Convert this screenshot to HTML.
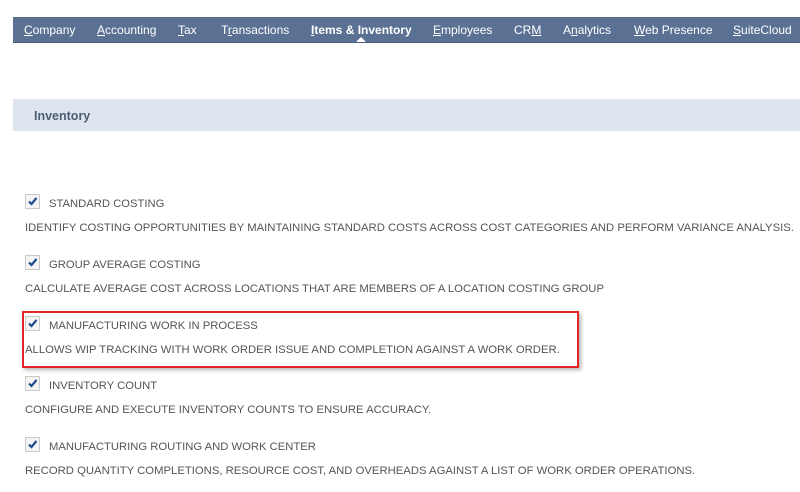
<!DOCTYPE html>
<html><head><style>
body{margin:0;width:800px;height:492px;background:#fff;font-family:"Liberation Sans",Arial,sans-serif;position:relative;overflow:hidden}
.nav{position:absolute;left:13px;top:17px;width:787px;height:25px;background:#5b7194;border-bottom:1px solid #4a5f80}
.nav span{position:absolute;top:6px;color:#fff;font-size:12px;white-space:nowrap}
.nav u{text-decoration:underline}
.nav b{font-weight:bold}
.tri{position:absolute;left:356px;top:37px;width:0;height:0;border-left:5px solid transparent;border-right:5px solid transparent;border-bottom:5px solid #fff}
.bar{position:absolute;left:13px;top:99px;width:787px;height:32px;background:#dfe5ee}
.bar span{position:absolute;left:21px;top:10px;font-size:12.5px;font-weight:bold;color:#4d5d76}
.cb{position:absolute;left:25px;width:13px;height:13px;border:1px solid #c9c9c9;background:#f4f4f4}
.cb svg{position:absolute;left:1px;top:1px}
.lbl{position:absolute;left:49px;font-size:11.25px;color:#555;white-space:nowrap}
.desc{position:absolute;left:25px;font-size:11.3px;color:#555;white-space:nowrap}
.red{position:absolute;left:22px;top:311px;width:553px;height:53px;border:2px solid #e3262a;box-shadow:2px 2px 4px rgba(0,0,0,.3)}
</style></head><body>
<div class="nav">
<span style="left:11px"><u>C</u>ompany</span>
<span style="left:84px"><u>A</u>ccounting</span>
<span style="left:165px"><u>T</u>ax</span>
<span style="left:208px">T<u>r</u>ansactions</span>
<span style="left:298px"><b><u>I</u>tems &amp; Inventory</b></span>
<span style="left:420px"><u>E</u>mployees</span>
<span style="left:501px">CR<u>M</u></span>
<span style="left:550px">A<u>n</u>alytics</span>
<span style="left:621px"><u>W</u>eb Presence</span>
<span style="left:720px"><u>S</u>uiteCloud</span>
</div>
<div class="tri"></div>
<div class="bar"><span>Inventory</span></div>

<div class="cb" style="top:194px"><svg width="11" height="11" viewBox="0 0 11 11"><path d="M2 5.5 L4.5 8 L9.5 2" stroke="#1f4c8f" stroke-width="2.2" fill="none"/></svg></div>
<div class="lbl" style="top:198px">STANDARD COSTING</div>
<div class="desc" style="top:222px">IDENTIFY COSTING OPPORTUNITIES BY MAINTAINING STANDARD COSTS ACROSS COST CATEGORIES AND PERFORM VARIANCE ANALYSIS.</div>

<div class="cb" style="top:255px"><svg width="11" height="11" viewBox="0 0 11 11"><path d="M2 5.5 L4.5 8 L9.5 2" stroke="#1f4c8f" stroke-width="2.2" fill="none"/></svg></div>
<div class="lbl" style="top:259px">GROUP AVERAGE COSTING</div>
<div class="desc" style="top:283px">CALCULATE AVERAGE COST ACROSS LOCATIONS THAT ARE MEMBERS OF A LOCATION COSTING GROUP</div>

<div class="cb" style="top:316px"><svg width="11" height="11" viewBox="0 0 11 11"><path d="M2 5.5 L4.5 8 L9.5 2" stroke="#1f4c8f" stroke-width="2.2" fill="none"/></svg></div>
<div class="lbl" style="top:320px">MANUFACTURING WORK IN PROCESS</div>
<div class="desc" style="top:344px">ALLOWS WIP TRACKING WITH WORK ORDER ISSUE AND COMPLETION AGAINST A WORK ORDER.</div>
<div class="red"></div>

<div class="cb" style="top:376px"><svg width="11" height="11" viewBox="0 0 11 11"><path d="M2 5.5 L4.5 8 L9.5 2" stroke="#1f4c8f" stroke-width="2.2" fill="none"/></svg></div>
<div class="lbl" style="top:380px">INVENTORY COUNT</div>
<div class="desc" style="top:404px">CONFIGURE AND EXECUTE INVENTORY COUNTS TO ENSURE ACCURACY.</div>

<div class="cb" style="top:437px"><svg width="11" height="11" viewBox="0 0 11 11"><path d="M2 5.5 L4.5 8 L9.5 2" stroke="#1f4c8f" stroke-width="2.2" fill="none"/></svg></div>
<div class="lbl" style="top:441px">MANUFACTURING ROUTING AND WORK CENTER</div>
<div class="desc" style="top:465px">RECORD QUANTITY COMPLETIONS, RESOURCE COST, AND OVERHEADS AGAINST A LIST OF WORK ORDER OPERATIONS.</div>
</body></html>
